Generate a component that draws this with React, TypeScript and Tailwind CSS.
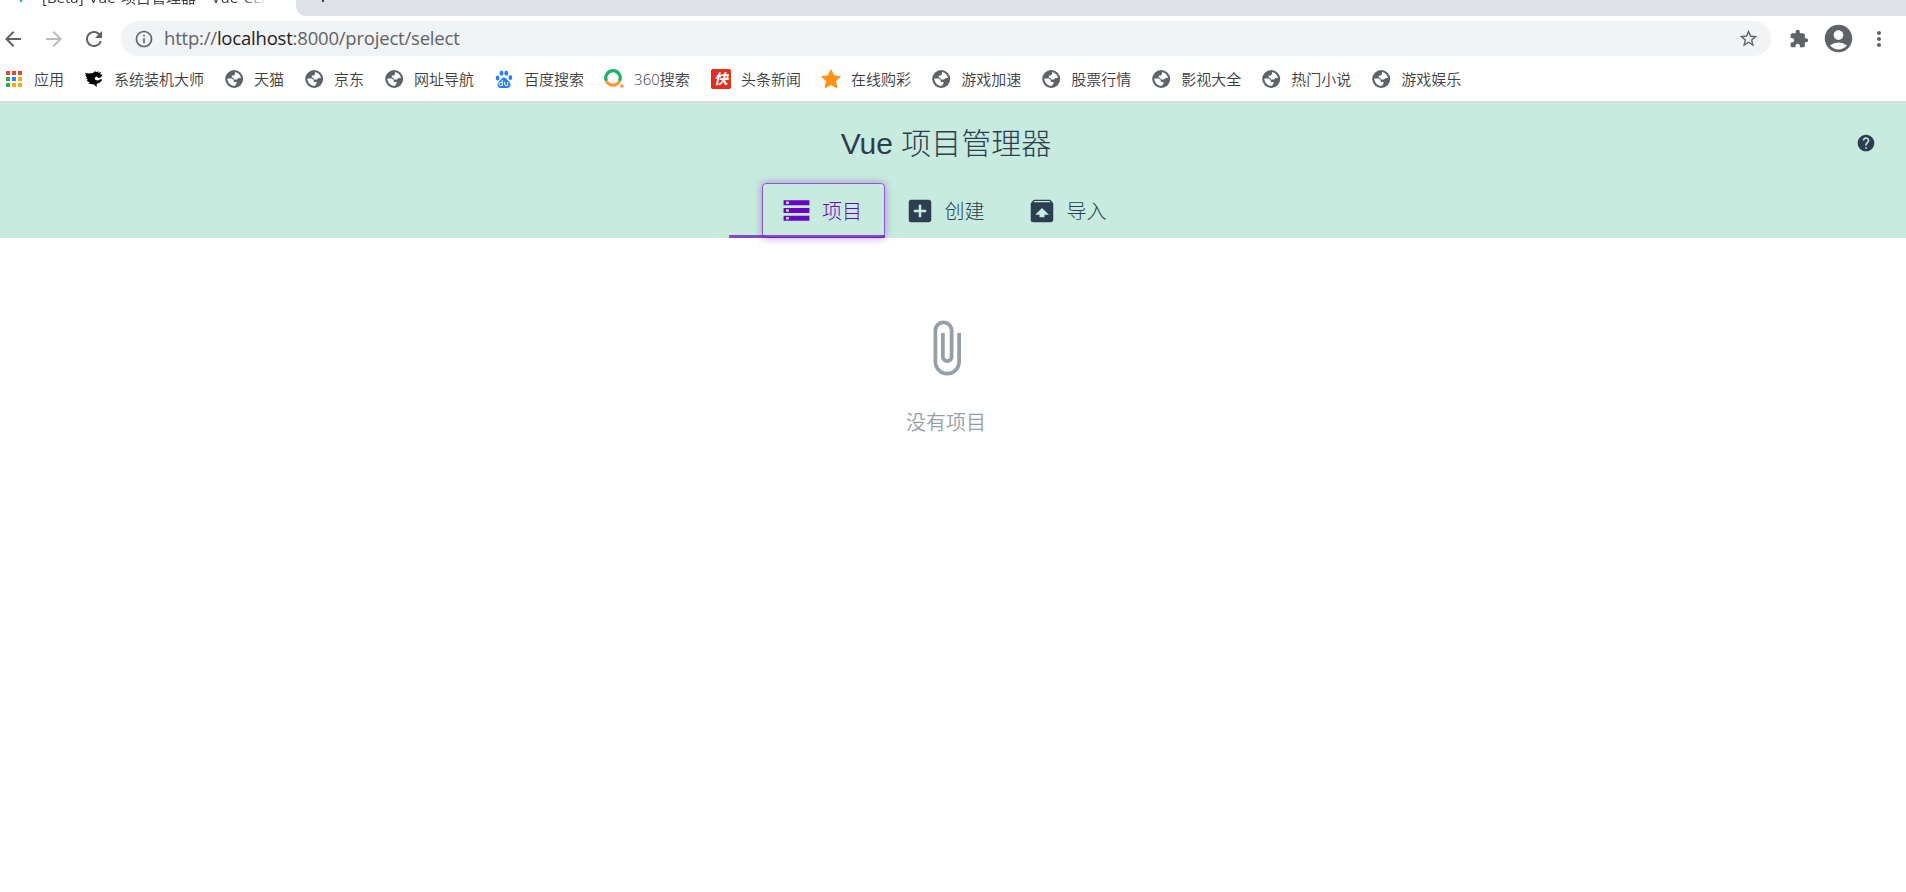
import React from 'react';
import {
  MdAccountCircle,
  MdAddBox,
  MdArrowBack,
  MdArrowForward,
  MdAttachFile,
  MdExtension,
  MdHelp,
  MdInfoOutline,
  MdMoreVert,
  MdRefresh,
  MdStarBorder,
  MdStorage,
  MdUnarchive,
} from 'react-icons/md';

const AppsIcon = () => (
  <svg viewBox="0 0 20 20" className="w-5 h-5">
    <path fill="#ea4335" d="M2 2h4v4H2zM8 2h4v4H8zM14 2h4v4h-4z" />
    <path fill="#34a853" d="M2 8h4v4H2zM2 14h4v4H2z" />
    <path fill="#1a8cff" d="M8 8h4v4H8z" />
    <path fill="#fbab0c" d="M14 8h4v4h-4zM8 14h4v4H8zM14 14h4v4h-4z" />
  </svg>
);

const DragonIcon = () => (
  <svg viewBox="0 0 20 20" className="w-5 h-5">
    <path
      fill="#000"
      d="M1 4l4 .5 4-.5 2-2 1 1.200 3-1-1 1.800 3.500-1-1.500 2 2.500 1-2 2.500-2 .5-2-1.500-2 1.500 1 2 2.500.5 3-1.500 1 1-2 2.500-2.500 1-1 1 .5 2.500-1.500-1-1.500-1.500-3-.5-3-.5 1.800-.8-3.300-2.200 1.500-.5-2-2 1.200-.3-2-2.200 1-.3z"
    />
  </svg>
);

const GlobeIcon = () => (
  <svg viewBox="0 0 20 20" className="w-5 h-5">
    <circle cx="10.200" cy="10" r="9" fill="#5f6368" />
    <path
      fill="#fff"
      d="M11 3c3 .4 5.500 2.800 6 6h-2.500l-1.500 1.500H9.500V8.700H7.800V6.500h2L11 5zM3.300 9.500h4.500l2 2v1.500h2.700v1.500l-1.500 2.300c-4.200.4-7.500-3-7.700-7.300z"
    />
  </svg>
);

const PawIcon = () => (
  <svg viewBox="0 0 20 20" className="w-5 h-5" fill="#2b7efb">
    <ellipse cx="3.6" cy="9" rx="1.9" ry="2.5" />
    <ellipse cx="7.5" cy="4.2" rx="1.9" ry="2.6" />
    <ellipse cx="12.3" cy="4.2" rx="1.9" ry="2.6" />
    <ellipse cx="16.4" cy="8.4" rx="1.8" ry="2.5" />
    <path d="M10 8.5c2 0 2.600 1.500 4 3 1.500 1.500 2.500 2.500 2.500 4.200 0 1.800-1.200 3.300-3.200 3.300H6.700c-2 0-3.200-1.500-3.200-3.300 0-1.700 1-2.700 2.500-4.200 1.400-1.500 2-3 4-3z" />
    <path d="M8.300 11v5.500H6.500a1.300 1.300 0 0 1 0-3h1.800M10.700 13v2.500q0 1 1 1h2V13" fill="none" stroke="#fff" strokeWidth="1" />
  </svg>
);

const RingIcon = () => (
  <svg viewBox="0 0 20 20" className="w-5 h-5">
    <path d="M2.500 12A7.200 7.200 0 1 1 15.500 12" fill="none" stroke="#19b46b" strokeWidth="3.200" />
    <path d="M2.500 12A7.200 7.200 0 0 0 15.500 12" fill="none" stroke="#fb9a3a" strokeWidth="3.200" />
    <circle cx="18" cy="17" r="1.800" fill="#fb9a3a" />
  </svg>
);

const NewsIcon = () => (
  <span className="w-5 h-5 rounded-[2px] bg-[#e1301e] text-white text-[14px] leading-5 font-bold italic text-center">
    快
  </span>
);

const StarIcon = () => (
  <svg viewBox="0 0 20 20" className="w-5 h-5" fill="#fd9217">
    <path stroke="#fd9217" strokeLinejoin="round" d="M10 .8l2.800 6 6.500.8-4.800 4.500 1.300 6.700L10 15.600l-5.800 3.200 1.300-6.700L.7 7.600l6.500-.8z" />
  </svg>
);

const bookmarks = [
  { title: '应用', icon: AppsIcon },
  { title: '系统装机大师', icon: DragonIcon },
  { title: '天猫', icon: GlobeIcon },
  { title: '京东', icon: GlobeIcon },
  { title: '网址导航', icon: GlobeIcon },
  { title: '百度搜索', icon: PawIcon },
  { title: '360搜索', icon: RingIcon },
  { title: '头条新闻', icon: NewsIcon },
  { title: '在线购彩', icon: StarIcon },
  { title: '游戏加速', icon: GlobeIcon },
  { title: '股票行情', icon: GlobeIcon },
  { title: '影视大全', icon: GlobeIcon },
  { title: '热门小说', icon: GlobeIcon },
  { title: '游戏娱乐', icon: GlobeIcon },
];

const tabs = [
  { title: '项目', icon: MdStorage, active: true },
  { title: '创建', icon: MdAddBox, active: false },
  { title: '导入', icon: MdUnarchive, active: false },
];

export default function App() {
  return (
    <div className="h-[892px] flex flex-col overflow-hidden bg-white font-['Open_Sans','Noto_Sans_CJK_SC',sans-serif]">
      {/* Tab strip */}
      <div className="h-4 shrink-0 flex bg-[#dee1e6] overflow-hidden">
        <div className="w-[296px] h-4 bg-white flex items-end pl-[14px]">
          <svg viewBox="0 0 14 12" className="w-[14px] h-3 mb-[13px]">
            <path d="M0 0h14L7 12z" fill="#41b883" />
          </svg>
          <span className="ml-[14px] mb-[9px] w-[240px] text-[15px] leading-5 [word-spacing:1.500px] text-[#3c4043] whitespace-nowrap overflow-hidden [mask-image:linear-gradient(to_right,black_200px,transparent_225px)]">
            [Beta] Vue 项目管理器 - Vue CLI
          </span>
        </div>
        <div className="flex-1 h-4 bg-white">
          <div className="h-4 rounded-bl-[10px] bg-[#dee1e6] pl-[21px]">
            <div className="w-[2px] h-[2px] ml-[5px] bg-[#3c4043]"></div>
          </div>
        </div>
      </div>

      {/* Toolbar */}
      <div className="h-[45px] shrink-0 flex items-center text-[#5f6368]">
        <MdArrowBack className="w-6 h-6 ml-[1px]" />
        <MdArrowForward className="w-6 h-6 ml-[17px] text-[#babcbe]" />
        <MdRefresh className="w-6 h-6 ml-4" />
        <div className="w-[1650px] h-[35px] ml-[15px] pl-[13px] pr-[12px] rounded-full bg-[#f1f3f4] flex items-center">
          <MdInfoOutline className="w-5 h-5" />
          <span className="ml-[10px] pb-[2px] flex-1 text-[18.500px] tracking-[-0.200px]">
            http://<span className="text-[#202124]">localhost</span>:8000/project/select
          </span>
          <MdStarBorder className="w-[21px] h-[21px]" />
        </div>
        <MdExtension className="w-5 h-5 ml-[18px]" />
        <MdAccountCircle className="w-[33px] h-[33px] ml-[13px]" />
        <MdMoreVert className="w-6 h-6 ml-3" />
      </div>

      {/* Bookmarks */}
      <div className="h-[42px] shrink-0 flex items-center gap-5 pl-1 pb-[4px] border-b-2 border-[#dadce0] text-[15px] text-[#3c4043] font-[350]">
        {bookmarks.map(({ title, icon: Icon }) => (
          <div key={title} className="flex items-center gap-[10px] whitespace-nowrap">
            <span className="w-5 h-5 flex items-center justify-center">
              <Icon />
            </span>
            <span className={title.startsWith('360') ? 'w-[57px]' : ''}>{title}</span>
          </div>
        ))}
      </div>

      {/* Project manager header */}
      <header className="h-[135px] shrink-0 bg-[#c8ebdf] text-[#2c3e50] flex flex-col font-['Liberation_Sans','Noto_Sans_CJK_SC',sans-serif]">
        <div className="h-[80px] flex items-center">
          <h1 className="flex-1 pl-[36px] text-center text-[30px] font-light">
            Vue 项目管理器
          </h1>
          <MdHelp className="w-5 h-5 mr-[30px]" />
        </div>
        <nav className="h-[55px] flex pl-[762px]">
          {tabs.map(({ title, icon: Icon, active }) => (
            <div
              key={title}
              className={
                active
                  ? 'relative w-[123px] h-[55px] pr-[2px] flex items-center justify-center rounded border border-[#8f55d2] shadow-[0_0_8px_rgba(104,6,193,0.4)] text-[#6806c1]'
                  : 'w-[122px] h-[55px] pr-px flex items-center justify-center'
              }
            >
              <Icon className={active ? 'w-[31px] h-[31px] -mx-px' : 'w-[30px] h-[30px] -mx-px'} />
              <span className="ml-[11px] mr-px pt-[3px] text-[20px] font-light">{title}</span>
              {active && <div className="absolute -left-[34px] -right-px -bottom-px h-[3px] bg-[#6806c1]/70"></div>}
            </div>
          ))}
        </nav>
      </header>

      {/* Empty list */}
      <main className="flex-1 flex flex-col items-center pr-[14px] pt-[80px] text-[#959fa8]">
        <MdAttachFile className="w-[60px] h-[60px]" />
        <p className="mt-[30px] text-[20px] leading-[30px] font-[350]">没有项目</p>
      </main>
    </div>
  );
}
